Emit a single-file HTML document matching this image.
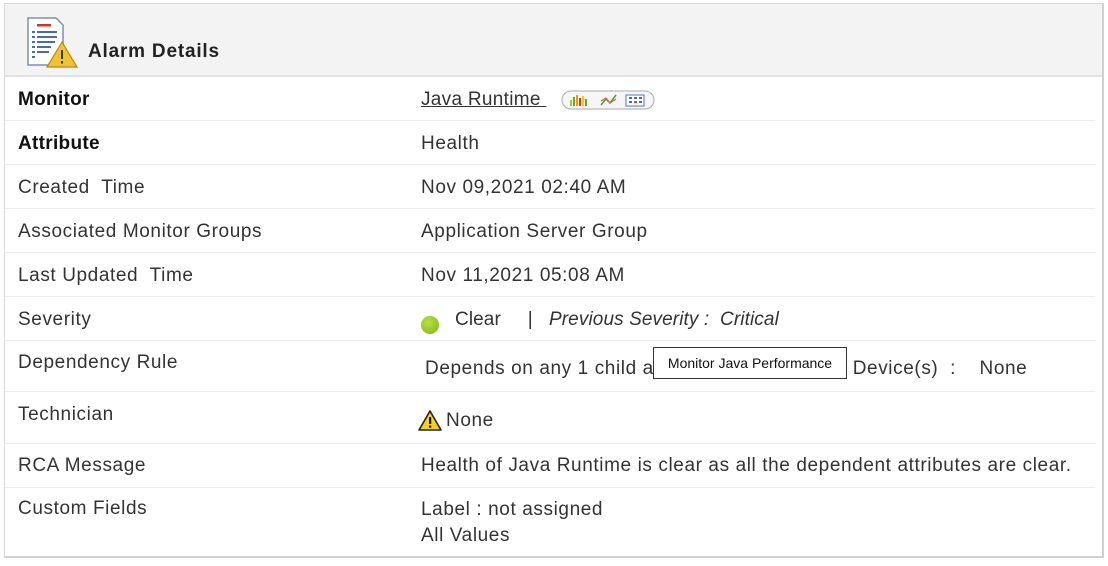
<!DOCTYPE html>
<html><head><meta charset="utf-8"><style>
body{margin:0;width:1108px;height:566px;background:#fff;font-family:"Liberation Sans",sans-serif;color:#333;position:relative;overflow:hidden}
.box{position:absolute;left:4px;top:3px;width:1097px;height:552px;border:1px solid #d8d8d8;border-right:2px solid #d0d0d0;border-bottom:2px solid #d0d0d0}
.hdr{position:absolute;left:0;top:0;width:100%;height:71px;background:#f3f3f3;border-bottom:2px solid #e2e2e2}
.ttl{position:absolute;left:83px;top:37px;font-size:19px;font-weight:bold;color:#222;letter-spacing:0.8px}
.row{position:absolute;left:5px;width:1090px;border-top:1px solid #ececec}
.l,.v{position:absolute;font-size:19px;color:#333;letter-spacing:0.6px;white-space:nowrap}
.l{left:13px}
.v{left:416px}
b{font-weight:bold;color:#111;letter-spacing:0.3px}
.tip{position:absolute;left:653px;top:347px;width:192px;height:30px;border:1px solid #333;background:#fff;font-size:14px;line-height:30px;text-align:center;color:#111}
</style></head><body>
<div class="box">
<div class="hdr">
<svg style="position:absolute;left:20px;top:12px" width="54" height="54" viewBox="0 0 54 54">
<path d="M3 2h28l7 7v40H3z" fill="#fff" stroke="#7d8fb0" stroke-width="1.5"/>
<rect x="12" y="8" width="14" height="2.5" fill="#c33"/>
<g fill="#4a6aa8"><rect x="7" y="15" width="3" height="2"/><rect x="12" y="15" width="20" height="2"/><rect x="7" y="20" width="3" height="2"/><rect x="12" y="20" width="20" height="2"/><rect x="7" y="25" width="3" height="2"/><rect x="12" y="25" width="18" height="2"/><rect x="7" y="30" width="3" height="2"/><rect x="12" y="30" width="14" height="2"/><rect x="7" y="35" width="3" height="2"/><rect x="12" y="35" width="12" height="2"/><rect x="7" y="40" width="3" height="2"/></g>
<path d="M37 26L52 51H22z" fill="#f2c230" stroke="#b08a10" stroke-width="1.2"/>
<rect x="36" y="34" width="2" height="9" fill="#333"/><rect x="36" y="45" width="2" height="2.5" fill="#333"/>
</svg>
<div class="ttl">Alarm Details</div>
</div>
</div>
<div class="row" style="top:76px;border:none"><span class="l" style="top:13px"><b>Monitor</b></span><span class="v" style="top:13px;text-decoration:underline;letter-spacing:0.3px">Java Runtime&nbsp;</span>
<svg style="position:absolute;left:556px;top:14px" width="94" height="20" viewBox="0 0 94 20"><rect x="1" y="1" width="92" height="18" rx="9" fill="#f6f6f6" stroke="#aaa"/>
<g><rect x="9" y="10" width="2" height="6" fill="#9c3"/><rect x="12" y="7" width="2" height="9" fill="#6a2"/><rect x="15" y="5" width="2" height="11" fill="#e90"/><rect x="18" y="8" width="2" height="8" fill="#d33"/><rect x="21" y="6" width="2" height="10" fill="#fc0"/><rect x="24" y="9" width="2" height="7" fill="#6a2"/></g>
<path d="M40 15l5-6 4 4 6-8" stroke="#3a3" fill="none" stroke-width="1.5"/><path d="M40 11l5-3 4 5 6-4" stroke="#e55" fill="none" stroke-width="1.2"/>
<rect x="65" y="5" width="18" height="11" fill="#fff" stroke="#57a"/><g fill="#46c"><rect x="68" y="7" width="3" height="2"/><rect x="73" y="7" width="3" height="2"/><rect x="78" y="7" width="3" height="2"/><rect x="68" y="11" width="3" height="2"/><rect x="73" y="11" width="3" height="2" fill="#d44"/><rect x="78" y="11" width="3" height="2"/></g></svg>
</div>
<div class="row" style="top:120px"><span class="l" style="top:12px"><b>Attribute</b></span><span class="v" style="top:12px">Health</span></div>
<div class="row" style="top:164px"><span class="l" style="top:12px">Created&nbsp; Time</span><span class="v" style="top:12px">Nov 09,2021 02:40 AM</span></div>
<div class="row" style="top:208px"><span class="l" style="top:12px">Associated Monitor Groups</span><span class="v" style="top:12px">Application Server Group</span></div>
<div class="row" style="top:252px"><span class="l" style="top:12px">Last Updated&nbsp; Time</span><span class="v" style="top:12px">Nov 11,2021 05:08 AM</span></div>
<div class="row" style="top:296px"><span class="l" style="top:12px">Severity</span>
<span style="position:absolute;left:416px;top:19px;width:18px;height:18px;border-radius:50%;background:radial-gradient(circle at 40% 35%,#b5e03c,#7cb51a)"></span>
<span class="v" style="left:450px;top:12px;letter-spacing:0.1px">Clear&nbsp;&nbsp;&nbsp;&nbsp;&nbsp;|&nbsp;&nbsp;&nbsp;<i>Previous Severity :&nbsp; Critical</i></span></div>
<div class="row" style="top:340px"><span class="l" style="top:11px">Dependency Rule</span><span class="v" style="left:420px;top:17px">Depends on any 1 child attribute &nbsp;&nbsp;&nbsp;&nbsp;&nbsp;&nbsp;&nbsp;&nbsp;&nbsp;&nbsp;&nbsp;Parent Device(s)&nbsp; :&nbsp;&nbsp;&nbsp; None</span></div>
<div class="row" style="top:391px"><span class="l" style="top:12px">Technician</span>
<svg style="position:absolute;left:413px;top:18px" width="24" height="21" viewBox="0 0 24 21"><path d="M12 1L23 20H1z" fill="#f5d020" stroke="#222" stroke-width="1.6" stroke-linejoin="round"/><rect x="11" y="7" width="2.2" height="7" fill="#111"/><rect x="11" y="15.5" width="2.2" height="2.2" fill="#111"/></svg>
<span class="v" style="left:441px;top:18px">None</span></div>
<div class="row" style="top:443px"><span class="l" style="top:11px">RCA Message</span><span class="v" style="top:11px">Health of Java Runtime is clear as all the dependent attributes are clear.</span></div>
<div class="row" style="top:487px"><span class="l" style="top:10px">Custom Fields</span><span class="v" style="top:9px;line-height:26px">Label : not assigned<br>All Values</span></div>
<div class="tip">Monitor Java Performance</div>
</body></html>
